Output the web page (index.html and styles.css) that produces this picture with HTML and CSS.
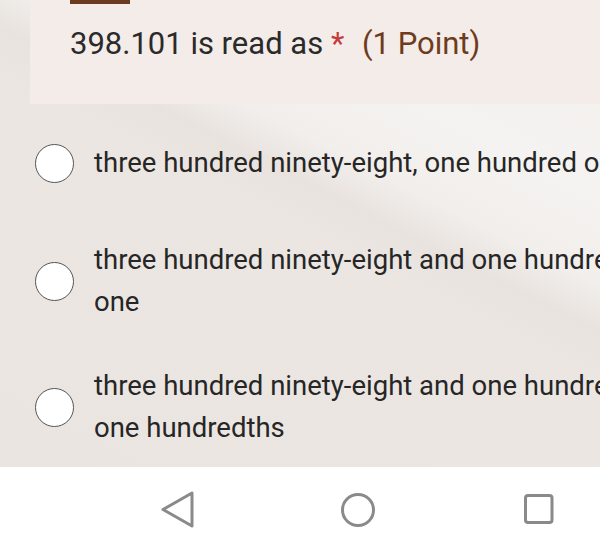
FILE: index.html
```html
<!DOCTYPE html>
<html lang="en">
<head>
<meta charset="utf-8">
<title>Question</title>
<link rel="stylesheet" href="styles.css">
</head>
<body>
<div class="screen">
  <main class="content">
    <section class="question-card">
      <div class="accent"></div>
      <h2 class="question-title">398.101 is read as <span class="required">*</span> <span class="points">(1 Point)</span></h2>
    </section>
    <ul class="options">
      <li class="option"><span class="radio"></span><span class="option-text">three hundred ninety-eight, one hundred one</span></li>
      <li class="option"><span class="radio"></span><span class="option-text">three hundred ninety-eight and one hundred one</span></li>
      <li class="option"><span class="radio"></span><span class="option-text">three hundred ninety-eight and one hundred one hundredths</span></li>
    </ul>
  </main>
  <nav class="navbar">
    <svg class="nav-icon" width="40" height="40" viewBox="0 0 40 40"><path d="M6 19.5 L35 3 L35 36 Z" fill="none" stroke="#8a8a8a" stroke-width="3" stroke-linejoin="round"/></svg>
    <svg class="nav-icon" width="40" height="40" viewBox="0 0 40 40"><circle cx="20" cy="20" r="15.5" fill="none" stroke="#8a8a8a" stroke-width="3"/></svg>
    <svg class="nav-icon" width="40" height="40" viewBox="0 0 40 40"><rect x="6.5" y="5.5" width="26.5" height="27" rx="2.5" fill="none" stroke="#8a8a8a" stroke-width="3"/></svg>
  </nav>
</div>
</body>
</html>
```
FILE: styles.css
```css
* { box-sizing: border-box; }
html, body { margin: 0; padding: 0; }
body {
  width: 600px;
  height: 552px;
  overflow: hidden;
  font-family: Roboto, "Noto Sans", sans-serif;
  color: #262626;
}
.screen {
  display: flex;
  flex-direction: column;
  height: 552px;
}
.content {
  height: 467px;
  overflow: hidden;
  background: linear-gradient(27deg, #ebe5e1 0%, #ece6e2 50%, #e9e3df 57%, #f1eeeb 63%, #f5f3f1 74%, #f3f0ed 100%);
}
.question-card {
  margin-left: 30px;
  width: 640px;
  background: #f3ece8;
  padding: 0 0 40px 40px;
}
.accent {
  width: 60px;
  height: 4px;
  background: #6b3a1f;
}
.question-title {
  margin: 20px 0 0;
  font-size: 31px;
  font-weight: 400;
  line-height: 40px;
  color: #2a2a2a;
  white-space: nowrap;
}
.required { color: #c43c3c; margin-right: 10px; }
.points { color: #6e3c1c; }
.options {
  list-style: none;
  margin: 25px 0 0;
  padding: 0 0 0 35px;
  display: flex;
  flex-direction: column;
  gap: 42px;
}
.option {
  display: flex;
  align-items: center;
  min-height: 68px;
  gap: 20px;
}
.radio {
  flex: none;
  width: 39px;
  height: 39px;
  border-radius: 50%;
  border: 1.5px solid #555;
  background: #fff;
}
.option-text {
  width: 560px;
  flex: none;
  font-size: 27.5px;
  line-height: 42px;
  color: #262626;
}
.navbar {
  height: 85px;
  background: #fff;
  display: flex;
  align-items: center;
  padding: 0 0 0 157px;
  gap: 141px;
}
.nav-icon { display: block; flex: none; }
```
